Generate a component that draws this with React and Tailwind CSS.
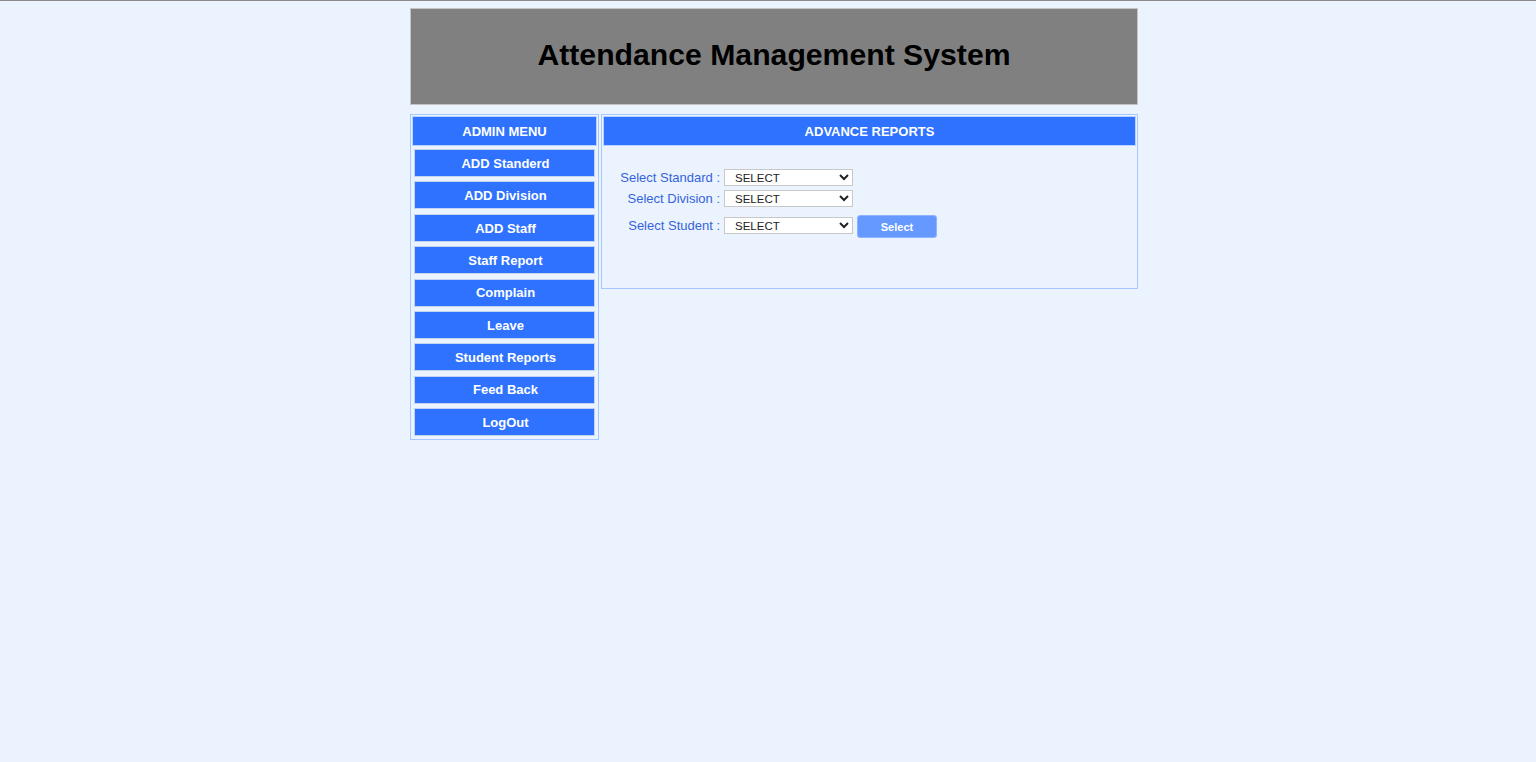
import { useState } from "react";

const menu = [
  "ADD Standerd",
  "ADD Division",
  "ADD Staff",
  "Staff Report",
  "Complain",
  "Leave",
  "Student Reports",
  "Feed Back",
  "LogOut",
];

function Picker({ value, setValue }) {
  return (
    <select
      value={value}
      onChange={(e) => setValue(e.target.value)}
      className="h-[17px] w-[129px] border border-[#c8c8c8] bg-white pl-[6px] text-[11.5px] leading-[15px] text-[#222]"
    >
      <option>SELECT</option>
    </select>
  );
}

export default function App() {
  const [std, setStd] = useState("SELECT");
  const [div, setDiv] = useState("SELECT");
  const [stu, setStu] = useState("SELECT");

  return (
    <div
      className="min-h-[762px] border-t border-[#8a8a8a] bg-[#ebf3ff] pl-[12px] pt-[7px]"
      style={{ fontFamily: '"Liberation Sans", Arial, sans-serif' }}
    >
      <div className="mx-auto w-[728px]">
        <div className="flex h-[97px] items-center justify-center border border-[#c4c4c4] bg-[#808080] pb-[4px]">
          <h1 className="text-[30.2px] font-bold text-black">Attendance Management System</h1>
        </div>

        <div className="mt-[9px] flex items-start gap-[2px]">
          {/* admin menu */}
          <div className="flex w-[189px] flex-col border border-[#a9c7ff] px-[1px] pb-[3px] pt-[1px]">
            <div className="flex h-[30px] items-center justify-center border border-[#b9d2ff] bg-[#2e72ff] pt-[2px] text-[13px] font-bold text-white">
              ADMIN MENU
            </div>
            <div className="mt-[3px] flex flex-col gap-[4.375px] px-[2px]">
              {menu.map((m) => (
                <button
                  key={m}
                  className="flex h-[28px] items-center justify-center border border-[#c3d3f2] bg-[#2e72ff] pl-[2px] pt-[1px] text-[13px] font-bold text-white"
                >
                  {m}
                </button>
              ))}
            </div>
          </div>

          {/* advance reports */}
          <div className="flex h-[175px] flex-1 flex-col border border-[#a9c7ff] p-[1px]">
            <div className="flex h-[30px] items-center justify-center border border-[#b9d2ff] bg-[#2e72ff] pt-[2px] text-[13px] font-bold text-white">
              ADVANCE REPORTS
            </div>
            <div className="mt-[23px] flex flex-col pl-[17px] text-[13px] leading-[17px] text-[#3563dc]">
              <div className="flex items-center gap-[4px]">
                <span className="w-[100px] whitespace-nowrap text-right">Select Standard :</span>
                <Picker value={std} setValue={setStd} />
              </div>
              <div className="mt-[4px] flex items-center gap-[4px]">
                <span className="w-[100px] whitespace-nowrap text-right">Select Division :</span>
                <Picker value={div} setValue={setDiv} />
              </div>
              <div className="mt-[6px] flex items-center gap-[4px]">
                <span className="w-[100px] whitespace-nowrap text-right">Select Student :</span>
                <Picker value={stu} setValue={setStu} />
                <button className="mt-[2px] h-[23px] w-[80px] rounded-[3px] border border-[#8fb4ff] bg-[#6699ff] pt-[1px] text-[11px] font-bold text-white">
                  Select
                </button>
              </div>
            </div>
          </div>
        </div>
      </div>
    </div>
  );
}
